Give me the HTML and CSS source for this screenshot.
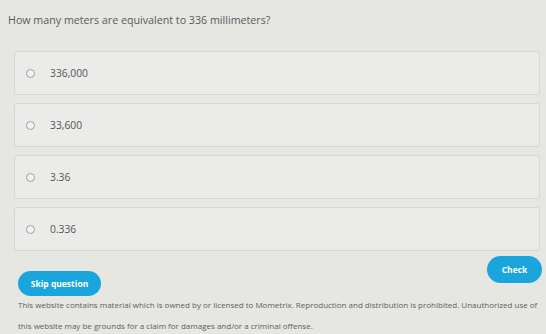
FILE: index.html
```html
<!DOCTYPE html>
<html>
<head>
<meta charset="utf-8">
<link rel="stylesheet" href="styles.css">
</head>
<body>
<div class="page">
  <h1 class="question">How many meters are equivalent to 336 millimeters?</h1>
  <div class="options">
    <label class="option"><span class="radio"></span><span class="label">336,000</span></label>
    <label class="option"><span class="radio"></span><span class="label">33,600</span></label>
    <label class="option"><span class="radio"></span><span class="label">3.36</span></label>
    <label class="option"><span class="radio"></span><span class="label">0.336</span></label>
  </div>
  <div class="actions">
    <button class="btn skip">Skip question</button>
    <button class="btn check">Check</button>
  </div>
  <p class="legal">This website contains material which is owned by or licensed to Mometrix. Reproduction and distribution is prohibited. Unauthorized use of this website may be grounds for a claim for damages and/or a criminal offense.</p>
</div>
</body>
</html>
```
FILE: styles.css
```css
html, body {
  margin: 0;
  padding: 0;
  background: #e6e6e3;
}
body {
  font-family: "Open Sans", "Liberation Sans", sans-serif;
  color: #555;
  width: 546px;
  height: 334px;
  overflow: hidden;
}
.page {
  padding: 12px 4px 0 8px;
}
.question {
  margin: 0;
  font-size: 10.7px;
  font-weight: 400;
  color: #5a5a5a;
  line-height: 16px;
}
.options {
  display: flex;
  flex-direction: column;
  gap: 8px;
  margin: 23px 2px 0 6px;
}
.option {
  display: flex;
  align-items: center;
  height: 44px;
  border: 1px solid #d6d6d4;
  border-radius: 3px;
  background: #ebebe9;
  padding-left: 11px;
  box-sizing: border-box;
}
.radio {
  width: 9px;
  height: 9px;
  border: 1px solid #a0a0a0;
  border-radius: 50%;
  background: #f2f2f2;
  box-sizing: border-box;
}
.label {
  margin-left: 15px;
  font-size: 10.3px;
  color: #555;
}
.actions {
  display: flex;
  justify-content: space-between;
  align-items: flex-start;
  margin: 5px 0 0 10px;
}
.btn {
  border: none;
  border-radius: 14px;
  background: #1aa6dd;
  color: #fff;
  font-family: "Open Sans", "Liberation Sans", sans-serif;
  font-weight: 700;
  font-size: 8.5px;
  padding: 0;
}
.skip {
  width: 83px;
  height: 25px;
  margin-top: 15px;
}
.check {
  width: 55px;
  height: 27px;
}
.legal {
  margin: -2px 0 0 10px;
  font-size: 8px;
  line-height: 21px;
  color: #606060;
}
```
